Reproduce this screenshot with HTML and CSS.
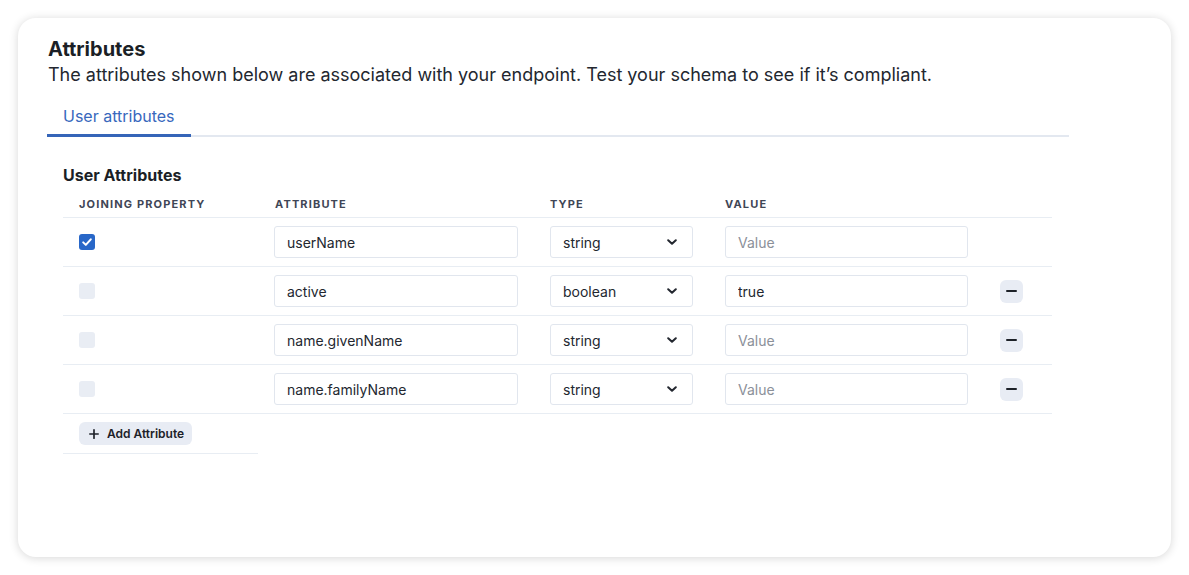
FILE: index.html
```html
<!DOCTYPE html>
<html lang="en">
<head>
  <meta charset="UTF-8">
  <meta name="viewport" content="width=device-width, initial-scale=1.0">
  <title>Attributes</title>
  <link rel="stylesheet" href="styles.css">
</head>
<body>
  <div class="card">
    <div class="content">
      <h1>Attributes</h1>
      <p class="desc">The attributes shown below are associated with your endpoint. Test your schema to see if it’s compliant.</p>

      <div class="tabs">
        <button class="tab active">User attributes</button>
      </div>

      <div class="section">
        <h2>User Attributes</h2>
        <div class="table">
          <div class="row head">
            <div class="cell">Joining property</div>
            <div class="cell">Attribute</div>
            <div class="cell">Type</div>
            <div class="cell">Value</div>
            <div class="cell"></div>
          </div>

          <div class="row">
            <div class="cell"><span class="check checked"><svg viewBox="0 0 16 16" width="16" height="16"><path d="M4.2 8.4l2.6 2.5 5-5.6" fill="none" stroke="#fff" stroke-width="2" stroke-linecap="round" stroke-linejoin="round"/></svg></span></div>
            <div class="cell"><input class="field" value="userName"></div>
            <div class="cell"><div class="select"><select class="field"><option>string</option><option>boolean</option></select><svg viewBox="0 0 10 6" width="10" height="6"><path d="M1.2 1.2L5 4.8l3.8-3.6" fill="none" stroke="#23272f" stroke-width="2" stroke-linecap="round" stroke-linejoin="round"/></svg></div></div>
            <div class="cell"><input class="field" placeholder="Value"></div>
            <div class="cell"></div>
          </div>

          <div class="row">
            <div class="cell"><span class="check"></span></div>
            <div class="cell"><input class="field" value="active"></div>
            <div class="cell"><div class="select"><select class="field"><option>boolean</option><option>string</option></select><svg viewBox="0 0 10 6" width="10" height="6"><path d="M1.2 1.2L5 4.8l3.8-3.6" fill="none" stroke="#23272f" stroke-width="2" stroke-linecap="round" stroke-linejoin="round"/></svg></div></div>
            <div class="cell"><input class="field" placeholder="Value" value="true"></div>
            <div class="cell"><button class="remove"><span></span></button></div>
          </div>

          <div class="row">
            <div class="cell"><span class="check"></span></div>
            <div class="cell"><input class="field" value="name.givenName"></div>
            <div class="cell"><div class="select"><select class="field"><option>string</option><option>boolean</option></select><svg viewBox="0 0 10 6" width="10" height="6"><path d="M1.2 1.2L5 4.8l3.8-3.6" fill="none" stroke="#23272f" stroke-width="2" stroke-linecap="round" stroke-linejoin="round"/></svg></div></div>
            <div class="cell"><input class="field" placeholder="Value"></div>
            <div class="cell"><button class="remove"><span></span></button></div>
          </div>

          <div class="row">
            <div class="cell"><span class="check"></span></div>
            <div class="cell"><input class="field" value="name.familyName"></div>
            <div class="cell"><div class="select"><select class="field"><option>string</option><option>boolean</option></select><svg viewBox="0 0 10 6" width="10" height="6"><path d="M1.2 1.2L5 4.8l3.8-3.6" fill="none" stroke="#23272f" stroke-width="2" stroke-linecap="round" stroke-linejoin="round"/></svg></div></div>
            <div class="cell"><input class="field" placeholder="Value"></div>
            <div class="cell"><button class="remove"><span></span></button></div>
          </div>

          <div class="add-row">
            <button class="add-btn"><svg viewBox="0 0 12 12" width="10" height="10"><path d="M6 1v10M1 6h10" stroke="#1d2128" stroke-width="2" stroke-linecap="round"/></svg>Add Attribute</button>
          </div>
        </div>
      </div>
    </div>
  </div>
</body>
</html>
```

FILE: styles.css
```css
/* General Styles */
* {
  box-sizing: border-box;
}

body {
  font-family: Inter, "Noto Sans", Arial, sans-serif;
  background-color: #fff;
  color: #23272f;
  margin: 0;
  padding: 18px;
  height: 100vh;
}

.card {
  background-color: #fff;
  border-radius: 18px;
  box-shadow: 0 1px 10px rgba(0, 0, 0, 0.16);
  height: 100%;
  padding: 19px 29px;
}

.content {
  width: 1022px;
}

h1 {
  margin: 0 0 0 1px;
  font-size: 20px;
  line-height: 24px;
  font-weight: 700;
  color: #1b1f26;
}

.desc {
  margin: 2px 0 0 1px;
  font-size: 18px;
  line-height: 24px;
  color: #23272f;
}

/* Tabs */
.tabs {
  display: flex;
  border-bottom: 2px solid #e3e8f0;
}

.tab {
  border: none;
  background: none;
  font-family: inherit;
  font-size: 16px;
  line-height: 22px;
  color: #3868bd;
  padding: 18px 16px 7px;
  border-bottom: 3px solid #3565b8;
  margin-bottom: -2px;
  cursor: pointer;
}

/* Table */
.section {
  padding-left: 16px;
}

h2 {
  margin: 28px 0 0;
  font-size: 16px;
  line-height: 20px;
  font-weight: 700;
  color: #1b1f26;
}

.table {
  width: 989px;
}

.row {
  display: grid;
  grid-template-columns: 195px 276px 175px 275px 68px;
  height: 49px;
  border-bottom: 1px solid #e8edf3;
  align-items: center;
}

.row .cell {
  padding: 0 16px;
}

.row.head {
  height: 33px;
  align-items: end;
  padding-bottom: 6px;
}

.row.head .cell {
  font-size: 11px;
  line-height: 14px;
  font-weight: 700;
  text-transform: uppercase;
  letter-spacing: 1.15px;
  color: #3f4656;
}

.row.head .cell:nth-child(2) {
  padding-left: 17px;
}

.check {
  display: block;
  width: 16px;
  height: 16px;
  border-radius: 3px;
  background-color: #e9edf4;
}

.check.checked {
  background-color: #2867c8;
}

.check svg {
  display: block;
}

.field {
  display: block;
  width: 100%;
  height: 32px;
  border: 1px solid #e1e6ee;
  border-radius: 3px;
  padding: 0 12px;
  font-family: inherit;
  font-size: 14px;
  color: #23272f;
  background-color: #fff;
  outline: none;
}

.field::placeholder {
  color: #8b9099;
}

.select {
  position: relative;
}

.select select {
  appearance: none;
  -webkit-appearance: none;
}

.select svg {
  position: absolute;
  right: 16px;
  top: 13px;
  pointer-events: none;
}

.remove {
  display: flex;
  align-items: center;
  justify-content: center;
  width: 23px;
  height: 23px;
  border: none;
  border-radius: 6px;
  background-color: #e8ecf4;
  padding: 0;
  cursor: pointer;
}

.remove span {
  display: block;
  width: 11px;
  height: 2.5px;
  border-radius: 1px;
  background-color: #1d2128;
}

.add-row {
  width: 195px;
  padding: 8px 16px;
  border-bottom: 1px solid #e8edf3;
}

.add-btn {
  display: flex;
  align-items: center;
  gap: 8px;
  height: 23px;
  padding: 0 8px 0 10px;
  border: none;
  border-radius: 6px;
  background-color: #e8ecf4;
  font-family: inherit;
  font-size: 12px;
  font-weight: 600;
  color: #1d2128;
  cursor: pointer;
}
```
